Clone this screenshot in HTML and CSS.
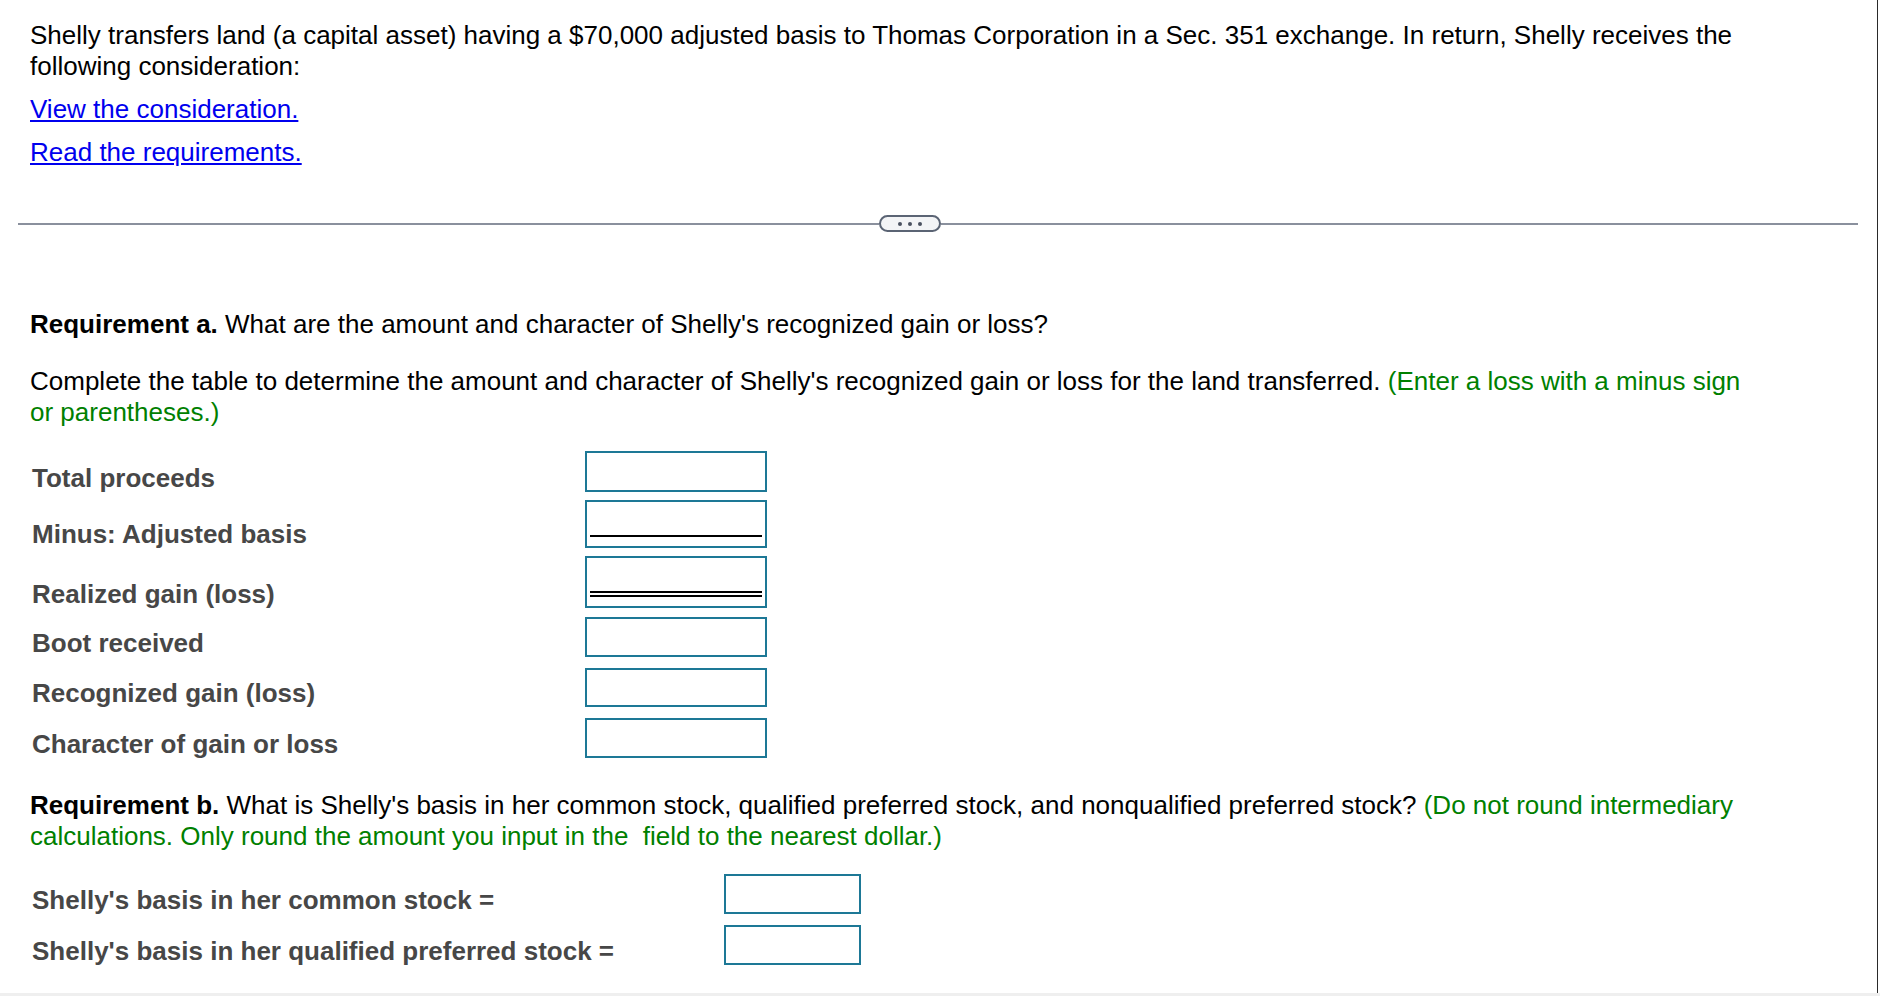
FILE: index.html
```html
<!DOCTYPE html>
<html lang="en">
<head>
<meta charset="utf-8">
<title>Sec. 351 exchange</title>
<link rel="stylesheet" href="styles.css">
</head>
<body>
<div class="page">
  <div class="content">
    <p class="text">Shelly transfers land (a capital asset) having a $70,000 adjusted basis to Thomas Corporation in a Sec. 351 exchange. In return, Shelly receives the following consideration:</p>
    <p class="link-line"><a href="#">View the consideration.</a></p>
    <p class="link-line"><a href="#">Read the requirements.</a></p>
  </div>

  <div class="divider">
    <span class="rule-left"></span>
    <span class="pill"><i class="dot"></i><i class="dot"></i><i class="dot"></i></span>
    <span class="rule-right"></span>
  </div>

  <div class="content">
    <p class="text req-a"><b>Requirement a.</b> What are the amount and character of Shelly's recognized gain or loss?</p>
    <p class="text complete">Complete the table to determine the amount and character of Shelly's recognized gain or loss for the land transferred. <span class="hint">(Enter a loss with a minus sign or parentheses.)</span></p>

    <div class="table">
      <div class="row"><span class="label">Total proceeds</span><span class="box h41"></span></div>
      <div class="row"><span class="label">Minus: Adjusted basis</span><span class="box h48"><span class="line single"></span></span></div>
      <div class="row"><span class="label">Realized gain (loss)</span><span class="box h52"><span class="line double"></span></span></div>
      <div class="row r4"><span class="label">Boot received</span><span class="box h40"></span></div>
      <div class="row r5"><span class="label">Recognized gain (loss)</span><span class="box h39"></span></div>
      <div class="row r5"><span class="label">Character of gain or loss</span><span class="box h40"></span></div>
    </div>

    <p class="text req-b"><b>Requirement b.</b> What is Shelly's basis in her common stock, qualified preferred stock, and nonqualified preferred stock? <span class="hint">(Do not round intermediary calculations. Only round the amount you input in the &nbsp;field to the nearest dollar.)</span></p>

    <div class="basis">
      <div class="row"><span class="label wide">Shelly's basis in her common stock =</span><span class="box small h40"></span></div>
      <div class="row"><span class="label wide">Shelly's basis in her qualified preferred stock =</span><span class="box small h40"></span></div>
    </div>
  </div>
</div>
<div class="strip"></div>
</body>
</html>
```

FILE: styles.css
```css
html, body {
  margin: 0;
  padding: 0;
  background: #ffffff;
}

body {
  width: 1880px;
  height: 996px;
  overflow: hidden;
  font-family: "Liberation Sans", Arial, Helvetica, sans-serif;
  font-size: 26px;
  line-height: 31px;
  color: #000000;
}

.page {
  box-sizing: border-box;
  width: 1878px;
  height: 993px;
  border-right: 1px solid #2a2a2a;
  padding-top: 20px;
}

.strip {
  height: 3px;
  background: #efefef;
}

.content {
  padding-left: 30px;
  width: 1725px;
}

.text {
  margin: 0;
}

.link-line {
  margin: 12px 0 0 0;
}

.link-line a {
  color: #0000ee;
  text-decoration: underline;
}

.hint {
  color: #008000;
}

/* divider with ellipsis pill */
.divider {
  display: flex;
  align-items: center;
  margin-top: 47px;
  margin-left: 18px;
  width: 1840px;
  height: 17px;
}

.rule-left {
  width: 861px;
  height: 2px;
  background: #8a909d;
}

.rule-right {
  flex: 1;
  height: 2px;
  background: #8a909d;
}

.pill {
  box-sizing: border-box;
  width: 62px;
  height: 17px;
  border: 2px solid #5b6474;
  border-radius: 9px;
  background: #f3f4f6;
  display: flex;
  align-items: center;
  justify-content: center;
  gap: 6px;
}

.dot {
  width: 4px;
  height: 4px;
  border-radius: 50%;
  background: #4b5160;
}

.req-a {
  margin-top: 77px;
}

.complete {
  margin-top: 26px;
}

/* answer table */
.table {
  margin-top: 23px;
  display: flex;
  flex-direction: column;
  gap: 8px;
}

.row {
  display: flex;
  align-items: flex-end;
}

.row.r4 {
  margin-top: 1px;
}

.row.r5 {
  margin-top: 3px;
}

.label {
  box-sizing: border-box;
  width: 555px;
  padding-left: 2px;
  margin-bottom: -2px;
  font-weight: bold;
  color: #474747;
}

.label.wide {
  width: 694px;
}

.box {
  box-sizing: border-box;
  width: 182px;
  border: 2px solid #1d7896;
  background: #ffffff;
  padding: 0 3px 9px 3px;
  display: flex;
  align-items: flex-end;
}

.box.small {
  width: 137px;
}

.h39 { height: 39px; }
.h40 { height: 40px; }
.h41 { height: 41px; }
.h48 { height: 48px; }
.h52 { height: 52px; }

.line {
  display: block;
  width: 100%;
}

.line.single {
  border-bottom: 2px solid #000000;
}

.line.double {
  border-bottom: 6px double #000000;
}

.req-b {
  margin-top: 32px;
}

.basis {
  margin-top: 22px;
  display: flex;
  flex-direction: column;
  gap: 11px;
}
```
